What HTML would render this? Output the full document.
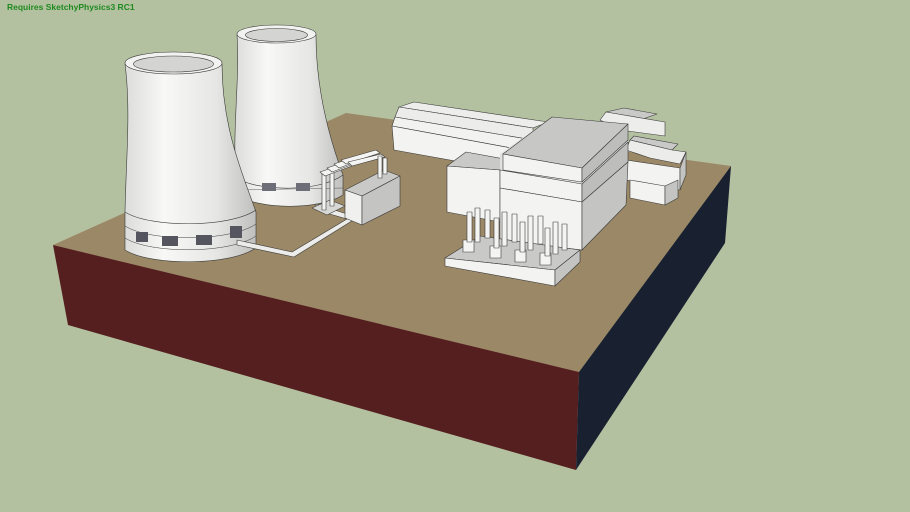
<!DOCTYPE html>
<html><head><meta charset="utf-8"><style>
html,body{margin:0;padding:0;background:#b4c1a1;width:910px;height:512px;overflow:hidden}
.t{position:absolute;left:7px;top:2px;font:bold 8.5px "Liberation Sans",sans-serif;color:#1f8a1f}
svg{position:absolute;left:0;top:0}
</style></head><body>
<svg width="910" height="512" viewBox="0 0 910 512">
<defs>
<linearGradient id="tw" x1="0" x2="1" y1="0" y2="0">
<stop offset="0" stop-color="#dcdcda"/><stop offset="0.3" stop-color="#f8f8f7"/><stop offset="0.7" stop-color="#e6e6e4"/><stop offset="1" stop-color="#bfbfbd"/>
</linearGradient>
</defs>
<g stroke="#3a3a3a" stroke-width="0.6" stroke-linejoin="round">
<polygon points="53,245 346,113 731,166 579,372" fill="#9b8866" stroke="none"/>
<polygon points="53,245 579,372 576,470 68,325" fill="#561f1f" stroke="none"/>
<polygon points="579,372 731,166 725,243 576,470" fill="#19202f" stroke="none"/>

<path d="M237,35 C240,80 232,130 236,178 L236,195 C260,210 320,210 343,195 L343,175 C330,140 316,90 316,35 Z" fill="url(#tw)"/>
<path d="M236,178 C260,192 320,192 343,175" fill="none"/>
<path d="M236,190 L343,188" fill="none" stroke-width="0.4"/>
<rect x="262" y="183" width="14" height="8" fill="#6e6e78" stroke="none"/>
<rect x="296" y="183" width="14" height="8" fill="#6e6e78" stroke="none"/>
<ellipse cx="276.5" cy="34" rx="39.5" ry="9" fill="#f2f2f0"/>
<ellipse cx="276.5" cy="35" rx="31" ry="6.5" fill="#d4d4d2"/>

<path d="M125,64 C131,110 126,160 125,212 L125,250 C150,266 230,266 256,248 L256,212 C245,180 222,130 222,64 Z" fill="url(#tw)"/>
<path d="M125,212 C150,228 230,228 256,210" fill="none"/>
<path d="M125,226 C150,242 230,242 256,224" fill="none" stroke-width="0.5"/>
<path d="M125,238 C150,254 230,254 256,236" fill="none" stroke-width="0.5"/>
<rect x="136" y="232" width="12" height="10" fill="#555560" stroke="none"/>
<rect x="162" y="236" width="16" height="10" fill="#555560" stroke="none"/>
<rect x="196" y="235" width="16" height="10" fill="#555560" stroke="none"/>
<rect x="230" y="226" width="12" height="12" fill="#555560" stroke="none"/>
<ellipse cx="173.5" cy="63" rx="48.5" ry="11" fill="#f2f2f0"/>
<ellipse cx="173.5" cy="64" rx="40" ry="8" fill="#d4d4d2"/>

<polygon points="237,240 292,252 352,216 355,219 294,257 237,245" fill="#ececea"/>
<polygon points="316,204 347,214 347,219 316,210" fill="#ececea"/>

<polygon points="312,208 330,200 345,206 327,215" fill="#d8d8d6"/>
<polygon points="345,190 384,170 400,176 362,196" fill="#c9c9c7"/>
<polygon points="345,190 362,196 362,225 345,218" fill="#f0f0ee"/>
<polygon points="362,196 400,176 400,206 362,225" fill="#c4c4c2"/>
<g fill="#f4f4f2">
<rect x="322" y="172" width="4" height="38"/><rect x="330" y="168" width="4" height="38"/>
<polygon points="320,172 355,160 360,163 325,176"/><polygon points="327,168 362,156 367,159 332,172"/>
<polygon points="334,164 369,152 374,155 339,168"/><polygon points="341,160 376,150 380,153 346,164"/>
<polygon points="348,162 381,154 385,157 352,166"/>
<rect x="378" y="156" width="4" height="22"/><rect x="383" y="158" width="4" height="16"/>
</g>

<polygon points="399,107 414,102 548,122 533,128" fill="#ededeb"/>
<polygon points="395,117 399,107 533,128 533,140" fill="#ececea"/>
<polygon points="392,126 395,117 533,140 533,152" fill="#f2f2f0"/>
<polygon points="392,126 533,152 533,175 394,150" fill="#f3f3f1"/>
<polygon points="606,112 624,108 657,114 640,120" fill="#c9c9c7"/>
<polygon points="600,120 606,112 665,122 665,136 620,130" fill="#ededeb"/>
<polygon points="630,140 634,136 678,144 672,150" fill="#c9c9c7"/>
<polygon points="626,150 630,140 672,150 686,152 680,164 650,158" fill="#ececea"/>
<polygon points="626,160 680,168 680,190 626,180" fill="#f3f3f1"/>
<polygon points="680,168 686,152 686,175 680,190" fill="#c4c4c2"/>
<polygon points="630,180 665,186 665,205 630,198" fill="#f3f3f1"/>
<polygon points="665,186 678,180 678,198 665,205" fill="#c4c4c2"/>
<polygon points="447,166 466,152 510,160 500,170" fill="#c9c9c7"/>
<polygon points="447,166 500,170 500,222 447,212" fill="#f3f3f1"/>
<!-- backing -->
<polygon points="500,154 552,117 628,124 626,205 582,250 500,240" fill="#e0e0de" stroke="none"/>
<polygon points="503,154 552,117 628,124 582,168" fill="#c7c7c5"/>
<polygon points="503,154 582,168 582,182 503,170" fill="#f3f3f1"/>
<polygon points="582,168 628,124 628,140 582,182" fill="#bdbdbb"/>
<polygon points="500,170 582,184 582,202 500,188" fill="#f3f3f1"/>
<polygon points="582,184 628,142 628,162 582,202" fill="#bdbdbb"/>
<polygon points="500,188 582,202 582,250 500,240" fill="#f3f3f1"/>
<polygon points="582,202 628,162 626,205 582,250" fill="#c4c4c2"/>
<polygon points="445,258 480,236 580,250 555,270" fill="#c9c9c7"/>
<polygon points="445,258 555,270 555,286 445,266" fill="#f3f3f1"/>
<polygon points="555,270 580,250 580,262 555,286" fill="#c4c4c2"/>
<g fill="#f4f4f2">
<rect x="463" y="240" width="11" height="12"/><rect x="490" y="246" width="11" height="12"/>
<rect x="515" y="250" width="11" height="12"/><rect x="540" y="253" width="11" height="12"/>
<rect x="467" y="212" width="5" height="30"/><rect x="475" y="208" width="5" height="34"/><rect x="485" y="210" width="5" height="28"/>
<rect x="494" y="218" width="5" height="30"/><rect x="502" y="212" width="5" height="34"/><rect x="512" y="214" width="5" height="28"/>
<rect x="520" y="222" width="5" height="30"/><rect x="528" y="216" width="5" height="34"/><rect x="538" y="216" width="5" height="28"/>
<rect x="545" y="228" width="5" height="28"/><rect x="553" y="222" width="5" height="32"/><rect x="562" y="224" width="5" height="26"/>
</g>
</g>
</svg>
<div class="t">Requires SketchyPhysics3 RC1</div>
</body></html>
